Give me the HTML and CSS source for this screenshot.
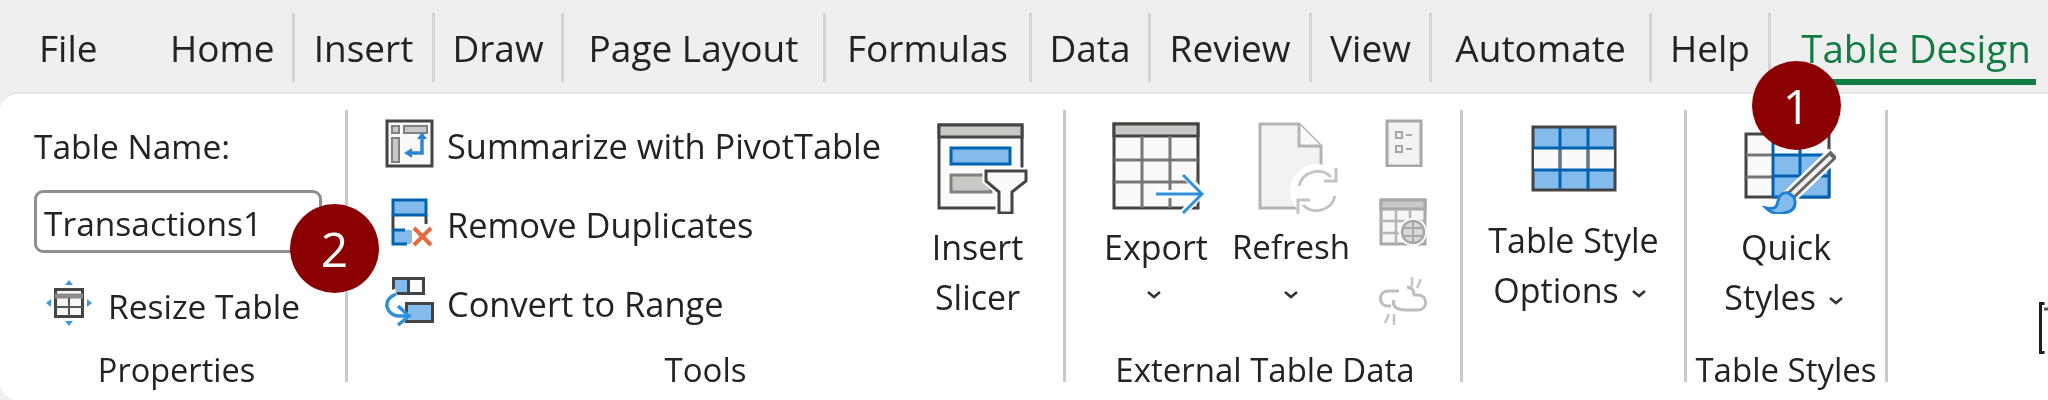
FILE: index.html
```html
<!DOCTYPE html>
<html lang="en">
<head>
<meta charset="utf-8">
<title>Table Design ribbon</title>
<link rel="stylesheet" href="styles.css">
</head>
<body>
<div class="tabs">
  <span class="tab tab-file">File</span>
  <span class="tab tab-home">Home</span>
  <span class="tab">Insert</span>
  <span class="tab">Draw</span>
  <span class="tab">Page Layout</span>
  <span class="tab">Formulas</span>
  <span class="tab">Data</span>
  <span class="tab">Review</span>
  <span class="tab">View</span>
  <span class="tab">Automate</span>
  <span class="tab">Help</span>
  <span class="tab tab-active">Table Design</span>
</div>
<div class="ribbon">
  <section class="group g-props">
    <div class="body props">
      <div class="prop-label">Table Name:</div>
      <div class="name-input">Transactions1</div>
      <div class="resize">
        <svg class="ic-resize" width="46" height="46" viewBox="0 0 46 46"><rect x="9.5" y="9.5" width="27" height="27" fill="#f6f6f6" stroke="#444" stroke-width="3"/><path d="M9 16h28" stroke="#8a8a8a" stroke-width="5"/><path d="M9 27h28M23 18v18" stroke="#555" stroke-width="2"/><path d="M23 0l-4 5h8zM23 46l-4-5h8zM0 23l5-4v8zM46 23l-5-4v8z" fill="#3b97de"/></svg>
        <span>Resize Table</span>
      </div>
    </div>
    <div class="label label-props">Properties</div>
  </section>

  <section class="group g-tools">
    <div class="body tools">
      <div class="rows">
        <div class="row">
          <svg width="49" height="49" viewBox="0 0 49 49"><rect x="2" y="2" width="45" height="45" fill="#fafafa" stroke="#444" stroke-width="3"/><path d="M7 7h7v7H7zM19 7h23v7H19zM7 19h7v24H7z" fill="#c8c8c4" stroke="#808080" stroke-width="2"/><path d="M37 17v17H24" fill="none" stroke="#2e86d2" stroke-width="3.5"/><path d="M37 13l-5 7h10zM19 34l8-5v10z" fill="#2e86d2"/></svg>
          <span>Summarize with PivotTable</span>
        </div>
        <div class="row">
          <svg width="49" height="49" viewBox="0 0 49 49"><path d="M8 17v14" stroke="#444" stroke-width="3"/><path d="M41 17v9" stroke="#444" stroke-width="3"/><rect x="8" y="2" width="33" height="15" fill="#83bbec" stroke="#0063b1" stroke-width="3"/><path d="M8 32h19v14H8z" fill="#83bbec"/><path d="M20 32H8v14h14" fill="none" stroke="#0063b1" stroke-width="3"/><path d="M28 29l19 19M47 29L28 48" stroke="#fff" stroke-width="7"/><path d="M29 30l17 17M46 30L29 47" stroke="#e8693a" stroke-width="4"/></svg>
          <span>Remove Duplicates</span>
        </div>
        <div class="row">
          <svg width="49" height="49" viewBox="0 0 49 49"><rect x="8.500" y="1.500" width="30" height="15" fill="#fafafa" stroke="#444" stroke-width="3"/><rect x="10" y="3" width="13" height="12" fill="#83bbec"/><path d="M23.500 2v15" stroke="#444" stroke-width="3"/><rect x="21.500" y="26.500" width="26" height="18" fill="#83bbec" stroke="#444" stroke-width="3"/><path d="M11 15C3 18 0 24 2 30c2 6 7 9 12 9h10" fill="none" stroke="#fff" stroke-width="7"/><path d="M11 17C4 20 1 24 2 30c2 6 7 9 12 9h10" fill="none" stroke="#2e8fdc" stroke-width="3.500"/><path d="M13 29l11 10-11 9" fill="none" stroke="#2e8fdc" stroke-width="3.500"/></svg>
          <span>Convert to Range</span>
        </div>
      </div>
      <div class="big big-slicer">
        <svg width="92" height="92" viewBox="0 0 92 92"><path d="M71 86H3V3h83v60" fill="#fafafa" stroke="#444" stroke-width="3"/><rect x="3" y="3" width="83" height="12" fill="#c8c8c4" stroke="#444" stroke-width="3"/><rect x="15" y="26" width="59" height="16" fill="#83bbec" stroke="#0063b1" stroke-width="3"/><rect x="15" y="53" width="40" height="17" fill="#c8c8c4" stroke="#808080" stroke-width="3"/><path d="M50 49h40v10L76 70v21H63V70L50 59z" fill="#fafafa" stroke="#fff" stroke-width="7"/><path d="M50 49h40v10L76 70v21H63V70L50 59z" fill="#fafafa" stroke="#444" stroke-width="3"/></svg>
        <span class="t">Insert</span>
        <span class="t">Slicer</span>
      </div>
    </div>
    <div class="label">Tools</div>
  </section>

  <section class="group g-ext">
    <div class="body ext">
      <div class="big big-export">
        <svg class="ic-big" width="92" height="92" viewBox="0 0 92 92"><rect x="2" y="2" width="84" height="84" fill="#fafafa" stroke="#444" stroke-width="3"/><rect x="2" y="2" width="84" height="12" fill="#c8c8c4" stroke="#444" stroke-width="3"/><path d="M30 14v72M58 14v72M2 38h84M2 60h84" stroke="#767676" stroke-width="3"/><path d="M44 72h46" stroke="#fff" stroke-width="8"/><path d="M70 50l20 21-20 21" fill="none" stroke="#fff" stroke-width="7"/><path d="M44 72h46M71 53l19 19-19 19" fill="none" stroke="#2e8fdc" stroke-width="3"/></svg>
        <span class="t">Export</span>
        <svg class="chev chev-row" width="14" height="8" viewBox="0 0 14 8"><path d="M1 1l6 5 6-5" fill="none" stroke="#333" stroke-width="2.500"/></svg>
      </div>
      <div class="big big-refresh">
        <svg class="ic-big" width="92" height="92" viewBox="0 0 92 92"><path d="M2 2h39l22 22v62H2z" fill="#f2f2f2" stroke="#b3b3b3" stroke-width="3"/><path d="M41 2v22h22" fill="#fafafa" stroke="#b3b3b3" stroke-width="3"/><circle cx="59" cy="69" r="27" fill="#fff"/><path d="M41 64a19 19 0 0 1 32-9M77 74a19 19 0 0 1-32 9" fill="none" stroke="#c4c4c4" stroke-width="3"/><path d="M78 46v13H66M40 92V78h12" fill="none" stroke="#c4c4c4" stroke-width="3"/></svg>
        <span class="t">Refresh</span>
        <svg class="chev chev-row" width="14" height="8" viewBox="0 0 14 8"><path d="M1 1l6 5 6-5" fill="none" stroke="#333" stroke-width="2.500"/></svg>
      </div>
      <div class="minis">
        <svg width="48" height="48" viewBox="0 0 48 48"><rect x="8" y="2" width="34" height="45" fill="#f3f3f3" stroke="#a8a8a8" stroke-width="3"/><path d="M17 13h6v6h-6zM17 27h6v6h-6z" fill="none" stroke="#a8a8a8" stroke-width="2"/><path d="M27 16h6M27 30h6" stroke="#a8a8a8" stroke-width="2"/></svg>
        <svg width="48" height="48" viewBox="0 0 48 48"><rect x="2" y="2" width="44" height="44" fill="#f6f6f6" stroke="#a8a8a8" stroke-width="3"/><rect x="2" y="2" width="44" height="9" fill="#c8c8c8" stroke="#a8a8a8" stroke-width="3"/><path d="M17 11v35M2 23h44M2 35h44M31 11v10" stroke="#b5b5b5" stroke-width="2.500"/><circle cx="34" cy="34" r="14" fill="#fff"/><circle cx="34" cy="34" r="11" fill="#d8d8d8" stroke="#a8a8a8" stroke-width="2.500"/><path d="M23 30h22M23 38h22M34 23v22" stroke="#a8a8a8" stroke-width="2"/></svg>
        <svg width="48" height="48" viewBox="0 0 48 48"><path d="M20 14H9C-1 14-1 29 9 29h3M27 33h12c10 0 10-15 0-15h-5" fill="none" stroke="#bdbdbd" stroke-width="3"/><path d="M15 23c-2 4 0 10 12 10M34 18c2-3 0-7-6-8" fill="none" stroke="#bdbdbd" stroke-width="3"/><path d="M33 0v10M42 2l-4 9M15 48V37M6 46l4-9" stroke="#c4c4c4" stroke-width="2.500"/></svg>
      </div>
    </div>
    <div class="label label-ext">External Table Data</div>
  </section>

  <section class="group g-opts">
    <div class="body big big-opts">
      <svg width="86" height="67" viewBox="0 0 86 67"><rect x="2" y="2" width="82" height="63" fill="#83bbec" stroke="#444" stroke-width="3"/><rect x="3" y="24" width="80" height="21" fill="#fafafa"/><path d="M29 3v61M57 3v61" stroke="#0063b1" stroke-width="3"/><path d="M29 24v21M57 24v21" stroke="#767676" stroke-width="3"/><path d="M3 23h80M3 45h80" stroke="#0063b1" stroke-width="3"/></svg>
      <span class="t">Table Style</span>
      <span class="t t-options">Options <svg class="chev" width="14" height="8" viewBox="0 0 14 8"><path d="M1 1l6 5 6-5" fill="none" stroke="#333" stroke-width="2.500"/></svg></span>
    </div>
  </section>

  <section class="group g-styles">
    <div class="body big big-quick">
      <svg width="92" height="82" viewBox="0 0 92 82"><rect x="2" y="2" width="83" height="63" fill="#fafafa" stroke="#444" stroke-width="3"/><path d="M2 23h28M2 45h28" stroke="#767676" stroke-width="3"/><path d="M29 23h56v42H29z" fill="#83bbec"/><path d="M29 2v63M56 2v63M29 23h56M29 44h56M29 65h56M85 23v42" fill="none" stroke="#0063b1" stroke-width="3"/><path d="M90 22L42 68" stroke="#fff" stroke-width="15"/><path d="M90 22L42 68" stroke="#666" stroke-width="10"/><path d="M87 25L42 68" stroke="#f3f3f3" stroke-width="4"/><path d="M44 61c10 4 9 16 0 19-8 3-16 2-22-4 10 2 11-2 12-7 1-6 5-9 10-8z" fill="#83bbec" stroke="#1f7fd0" stroke-width="3"/></svg>
      <span class="t">Quick</span>
      <span class="t t-styles">Styles <svg class="chev" width="14" height="8" viewBox="0 0 14 8"><path d="M1 1l6 5 6-5" fill="none" stroke="#333" stroke-width="2.500"/></svg></span>
    </div>
    <div class="label">Table Styles</div>
  </section>
</div>
<span class="badge badge-1">1</span>
<span class="badge badge-2">2</span>
<svg class="cursor" width="9" height="52" viewBox="0 0 9 52"><path d="M1.500 0v52M1.500 1.500h4M1.500 50.500h4" stroke="#1c1c2a" stroke-width="3" fill="none"/><path d="M5 7h4" stroke="#555" stroke-width="3"/></svg>
</body>
</html>
```

FILE: styles.css
```css
html, body { margin: 0; padding: 0; }
body {
  width: 2048px;
  height: 400px;
  overflow: hidden;
  position: relative;
  background: #efefef;
  font-family: "Open Sans", "Liberation Sans", sans-serif;
  font-size: 34px;
  color: #232323;
  filter: blur(.5px);
}
.tabs {
  height: 92px;
  display: grid;
  grid-template-columns: 131px 125px 140px 129px 262px 206px 119px 161px 120px 220px 119px 277px;
  align-items: start;
  padding: 13px 0 0 39px;
  box-sizing: border-box;
  font-size: 37px;
}
.tab {
  height: 69px;
  line-height: 70px;
  text-align: center;
  border-right: 3px solid #d4d4d4;
  white-space: nowrap;
}
.tab-file { border: 0; text-align: left; }
.tab-home { text-align: left; }
.tab-active {
  color: #107c41;
  border: 0;
  border-bottom: 6px solid #107c41;
  margin-left: 25px;
  width: 240px;
  height: 66px;
  font-size: 38.500px;
}
.ribbon {
  height: 290px;
  border-top: 2px solid #e6e6e6;
  background: #fff;
  border-radius: 18px 0 0 18px;
  display: flex;
  padding-top: 16px;
}
.group {
  display: flex;
  flex-direction: column;
  align-items: center;
  height: 272px;
  border-right: 3px solid #c9c9c9;
  box-sizing: border-box;
  flex: none;
}
.body { flex: 1; width: 100%; box-sizing: border-box; }
.label { line-height: 36px; height: 36px; margin-bottom: -6px; white-space: nowrap; font-size: 33px; }
.label-props { margin-left: 8px; font-size: 32.500px; }
.label-ext { margin-left: 4px; }
.g-props { width: 348px; }
.g-tools { width: 718px; }
.g-ext { width: 397px; }
.g-opts { width: 224px; }
.g-styles { width: 201px; }

.props { padding: 14px 0 0 34px; display: flex; flex-direction: column; font-size: 33.500px; }
.prop-label { line-height: 44px; }
.name-input {
  width: 288px;
  height: 63px;
  margin-top: 22px;
  padding-left: 7px;
  box-sizing: border-box;
  border: 3px solid #8f8f8f;
  border-radius: 9px;
  line-height: 60px;
  white-space: nowrap;
}
.resize { display: flex; align-items: center; gap: 16px; margin: 24px 0 0 12px; white-space: nowrap; }
.resize span { padding-top: 6px; }
.ic-resize { flex: none; }

.tools { display: flex; padding-left: 37px; }
.rows { display: flex; flex-direction: column; gap: 30px; width: 551px; padding-top: 9px; font-size: 34.400px; }
.row { display: flex; align-items: center; gap: 13px; height: 49px; white-space: nowrap; }
.row span { padding-top: 3px; }
.row svg { flex: none; }

.big { display: flex; flex-direction: column; align-items: center; white-space: nowrap; }
.big svg { flex: none; }
.big .t { line-height: 50px; }
.big-slicer { width: 92px; padding-top: 12px; }
.big-slicer .t { margin-right: 9px; }
.big-slicer > svg, .ic-big { margin-bottom: 8px; }
.chev { vertical-align: 5px; margin-left: 4px; }
.chev-row { margin: 19px 0 0; }

.ext { display: flex; padding-left: 37px; }
.big-export { width: 110px; padding-top: 12px; }
.big-export .t { margin-right: 4px; }
.big-export .chev-row { margin-right: 8px; }
.big-refresh { width: 118px; padding-top: 12px; margin-left: 19px; font-size: 33px; }
.big-refresh .ic-big { margin-left: 26px; }
.minis { display: flex; flex-direction: column; gap: 31px; margin-left: 29px; padding-top: 9px; }

.big-opts { padding-top: 15px; }
.big-opts > svg { margin-bottom: 23px; }
.t-options { margin-right: 8px; }
.big-quick { padding-top: 22px; }
.big-quick > svg { margin: 0 0 8px 8px; }
.t-styles { margin-right: 5px; }

.badge {
  position: absolute;
  width: 89px;
  height: 89px;
  border-radius: 50%;
  background: #8b0000;
  color: #fff;
  font-size: 48px;
  line-height: 89px;
  text-align: center;
}
.badge-1 { left: 1752px; top: 61px; }
.badge-2 { left: 290px; top: 204px; }
.cursor { position: absolute; left: 2039px; top: 302px; }
```
